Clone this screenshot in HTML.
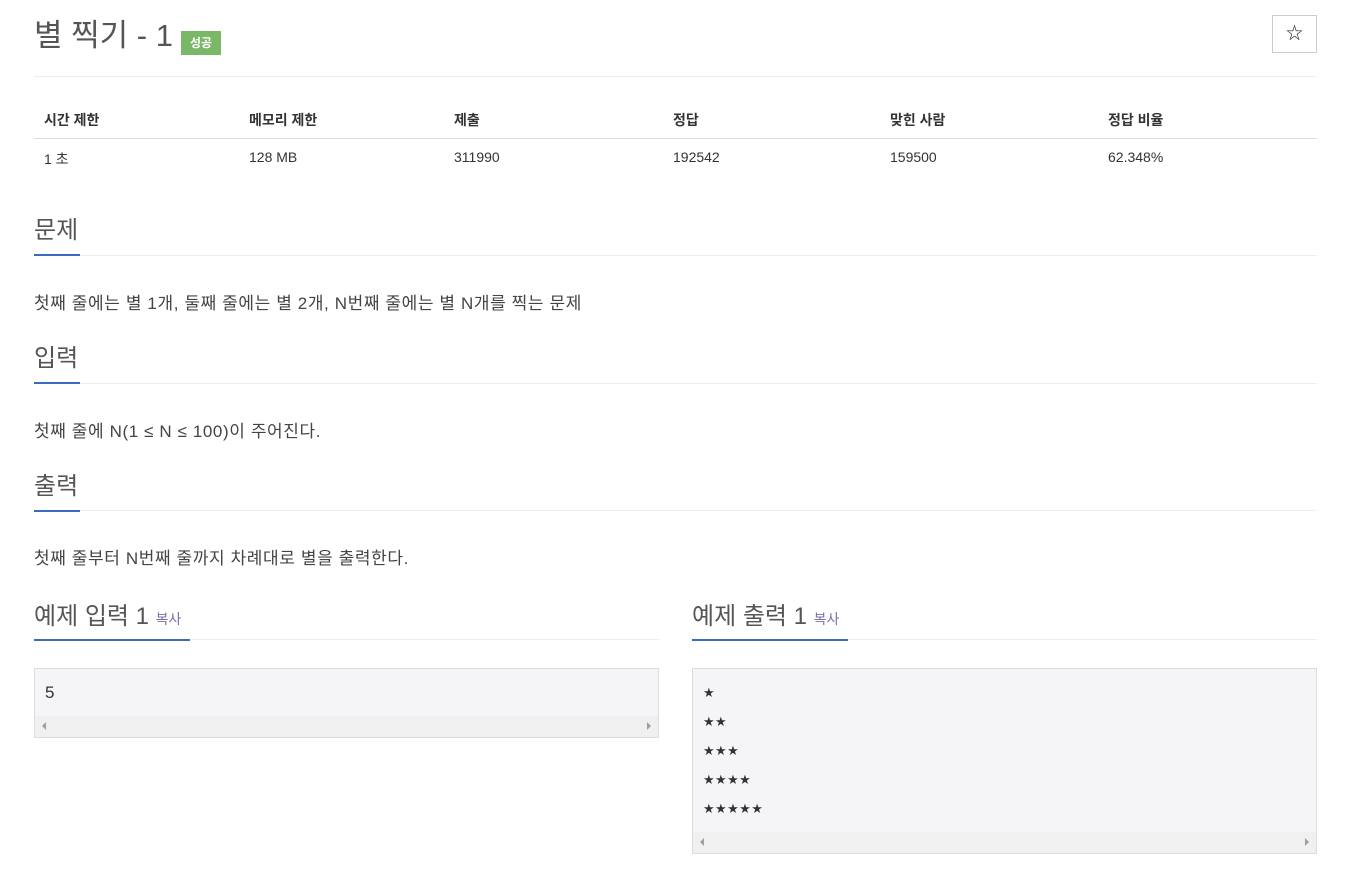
<!DOCTYPE html>
<html><head><meta charset="utf-8"><style>
*{margin:0;padding:0;box-sizing:border-box}
body{width:1367px;height:870px;background:#fff;font-family:"Liberation Sans","Noto Sans CJK KR",sans-serif;color:#333;position:relative;overflow:hidden}
h1{position:absolute;left:34px;top:14px;font-size:31px;font-weight:normal;color:#555;line-height:44px}
.badge{position:absolute;left:181px;top:31px;width:40px;height:24px;background:#7ab867;color:#fff;font-size:12px;text-align:center;line-height:24px;font-weight:bold}
.star{position:absolute;left:1272px;top:15px;width:45px;height:38px;border:1px solid #ccc;text-align:center;line-height:36px;font-size:17px;color:#222}
.hr{position:absolute;height:1px;background:#eee}
.th{position:absolute;top:110px;font-size:14px;font-weight:bold;color:#333}
.td{position:absolute;top:149px;font-size:14px;color:#333}
.sec{position:absolute;left:34px;font-size:24px;color:#555;line-height:30px}
.ul{position:absolute;height:2px;background:#3a6bbd}
.p{position:absolute;left:34px;font-size:17px;color:#444;letter-spacing:0.6px}
.box{position:absolute;background:#f5f5f8;border:1px solid #ddd}
.sb{position:absolute;left:0;right:0;bottom:0;height:21px;background:#f0f0f0}
.sb:before{content:"";position:absolute;left:7px;top:6px;border:4px solid transparent;border-right:4px solid #a0a0a0;border-left:0}
.sb:after{content:"";position:absolute;right:7px;top:6px;border:4px solid transparent;border-left:4px solid #a0a0a0;border-right:0}
pre{font-family:"DejaVu Sans",sans-serif;font-size:13px;line-height:29px;color:#333;position:absolute;left:10px;top:10px;letter-spacing:0.4px}
.copy{font-size:14px;color:#7b6fa8}
</style></head><body>
<h1>별 찍기 - 1</h1>
<div class="badge">성공</div>
<div class="star">☆</div>
<div class="hr" style="left:34px;width:1283px;top:76px"></div>
<div class="th" style="left:44px">시간 제한</div>
<div class="th" style="left:249px">메모리 제한</div>
<div class="th" style="left:454px">제출</div>
<div class="th" style="left:673px">정답</div>
<div class="th" style="left:890px">맞힌 사람</div>
<div class="th" style="left:1108px">정답 비율</div>
<div class="hr" style="left:34px;width:1283px;top:138px;background:#ddd;height:1px"></div>
<div class="td" style="left:44px">1 초</div>
<div class="td" style="left:249px">128 MB</div>
<div class="td" style="left:454px">311990</div>
<div class="td" style="left:673px">192542</div>
<div class="td" style="left:890px">159500</div>
<div class="td" style="left:1108px">62.348%</div>

<div class="sec" style="top:216px">문제</div>
<div class="hr" style="left:34px;width:1283px;top:255px"></div>
<div class="ul" style="left:34px;width:46px;top:254px"></div>
<div class="p" style="top:289px">첫째 줄에는 별 1개, 둘째 줄에는 별 2개, N번째 줄에는 별 N개를 찍는 문제</div>

<div class="sec" style="top:344px">입력</div>
<div class="hr" style="left:34px;width:1283px;top:383px"></div>
<div class="ul" style="left:34px;width:46px;top:382px"></div>
<div class="p" style="top:417px">첫째 줄에 N(1 ≤ N ≤ 100)이 주어진다.</div>

<div class="sec" style="top:472px">출력</div>
<div class="hr" style="left:34px;width:1283px;top:510px"></div>
<div class="ul" style="left:34px;width:46px;top:510px"></div>
<div class="p" style="top:544px">첫째 줄부터 N번째 줄까지 차례대로 별을 출력한다.</div>

<div class="sec" style="top:602px">예제 입력 1 <span class="copy">복사</span></div>
<div class="hr" style="left:34px;width:625px;top:639px"></div>
<div class="ul" style="left:34px;width:156px;top:639px"></div>
<div class="box" style="left:34px;top:668px;width:625px;height:70px"><pre style="font-family:'Liberation Sans',sans-serif;font-size:17px;top:9px;letter-spacing:0">5</pre><div class="sb"></div></div>

<div class="sec" style="left:692px;top:602px">예제 출력 1 <span class="copy">복사</span></div>
<div class="hr" style="left:692px;width:625px;top:639px"></div>
<div class="ul" style="left:692px;width:156px;top:639px"></div>
<div class="box" style="left:692px;top:668px;width:625px;height:186px"><pre>★
★★
★★★
★★★★
★★★★★</pre><div class="sb"></div></div>
</body></html>
